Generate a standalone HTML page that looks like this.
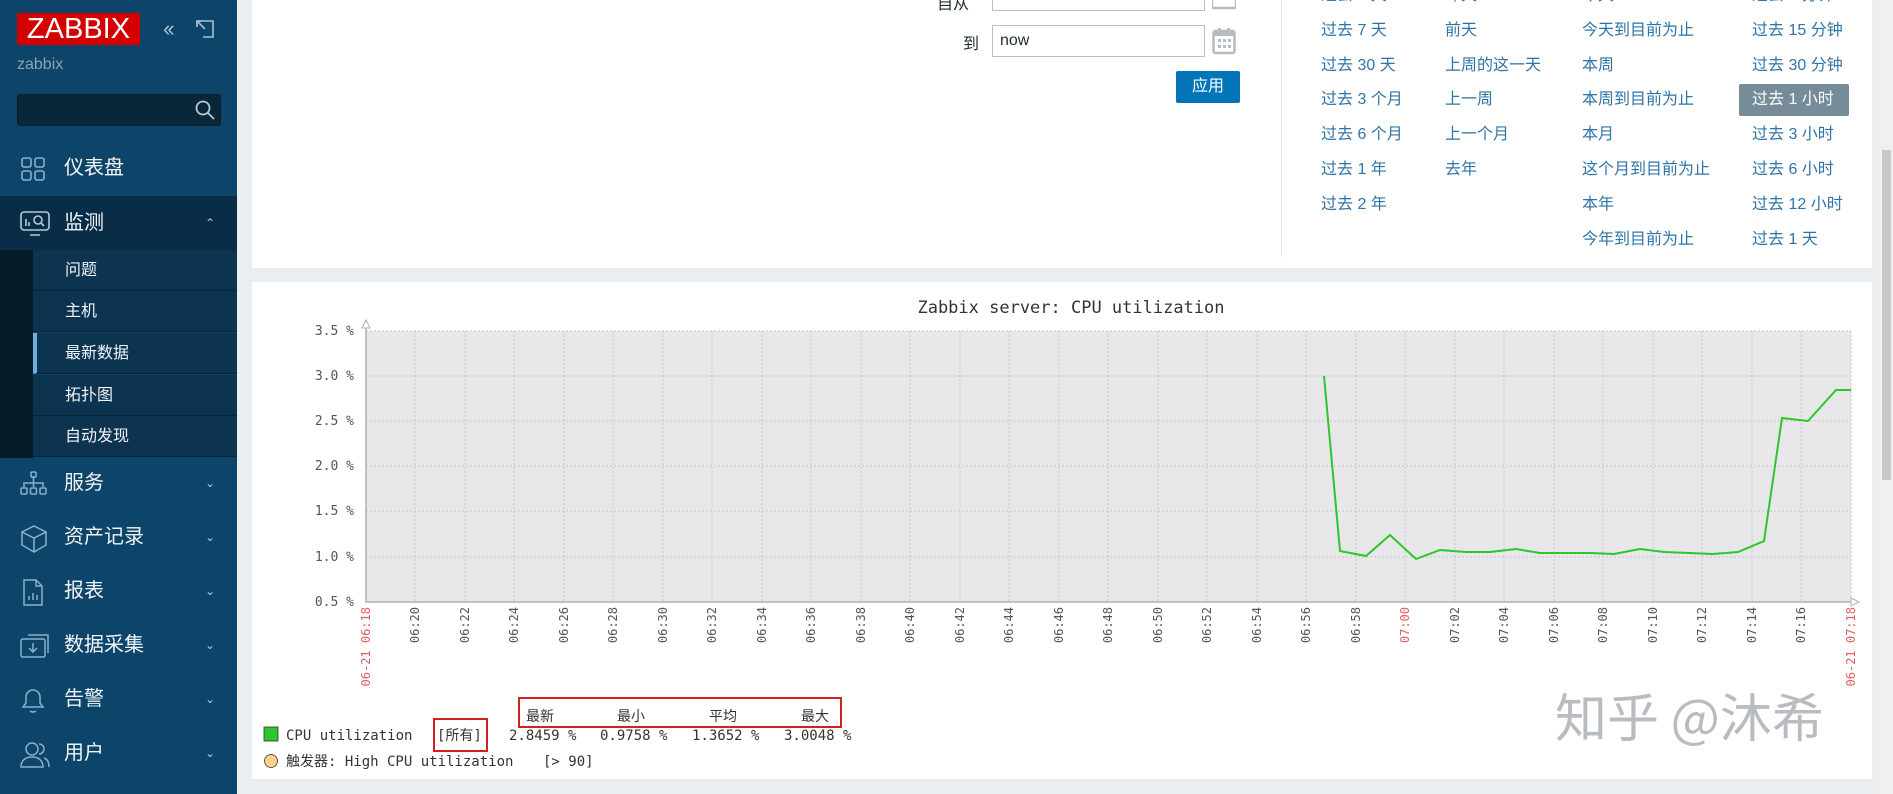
<!DOCTYPE html>
<html><head><meta charset="utf-8">
<style>
*{margin:0;padding:0;box-sizing:border-box}
body{width:1893px;height:794px;overflow:hidden;background:#ebeef0;font-family:"Liberation Sans","Noto Sans CJK SC",sans-serif;position:relative}
.sb{position:absolute;left:0;top:0;width:237px;height:794px;background:#0d4469}
.logo{position:absolute;left:17px;top:13px;width:123px;height:32px;background:#d40000;color:#fff;font-size:29px;line-height:32px;text-align:center;letter-spacing:0px}
.user{position:absolute;left:17px;top:56px;color:#8aa4b9;font-size:16px}
.search{position:absolute;left:17px;top:94px;width:204px;height:32px;background:#0a2639;border-radius:3px;border:1px solid #0a2030}
.nav{position:absolute;left:0;width:237px;height:54px;color:#f0f4f7;font-size:20px;line-height:54px;padding-left:64px}
.nav .ic{position:absolute;left:20px;top:15px}
.nav .ch{position:absolute;left:205px;top:0;font-size:12px;color:#b8c8d4}
.sub{position:absolute;left:33px;width:204px;height:41px;background:#0c3350;color:#f0f4f7;font-size:16px;line-height:41px;padding-left:32px;border-bottom:1px solid #082538}
.panel{position:absolute;background:#fff}
.lnk{position:absolute;color:#2f74a6;font-size:16px;line-height:20px;white-space:nowrap}
</style></head><body>
<div class="sb">
 <div class="logo">ZABBIX</div>
 <div style="position:absolute;left:163px;top:16px;color:#a9bfd0;font-size:22px;letter-spacing:-3px">&lsaquo;&lsaquo;</div>
 <svg style="position:absolute;left:195px;top:19px" width="20" height="20" fill="none" stroke="#a9bfd0" stroke-width="1.6"><path d="M2 8V2h16v16H8"/><path d="M2 2l8 8M2 2h5M2 2v5"/></svg>
 <div class="user">zabbix</div>
 <div class="search"><svg style="position:absolute;right:5px;top:5px" width="20" height="20" fill="none" stroke="#b8c8d4" stroke-width="1.8"><circle cx="8" cy="8" r="6.5"/><path d="M13 13l6 6"/></svg></div>
 <div class="nav" style="top:141px"><svg class="ic" width="26" height="26" fill="none" stroke="#8ab0cc" stroke-width="1.6"><rect x="2" y="2" width="9" height="9" rx="2"/><rect x="15" y="2" width="9" height="9" rx="2"/><rect x="2" y="15" width="9" height="9" rx="2"/><rect x="15" y="15" width="9" height="9" rx="2"/></svg>仪表盘</div>
 <div class="nav" style="top:196px;background:#0a2d47"><svg class="ic" width="30" height="26" fill="none" stroke="#b8c8d4" stroke-width="1.6"><rect x="1" y="1" width="28" height="18" rx="3"/><path d="M10 24h10M6 8v7M9 11v4"/><circle cx="18" cy="9" r="4"/><path d="M21 12l3 3"/></svg>监测<span class="ch">&#8963;</span></div>
 <div style="position:absolute;left:0;top:250px;width:33px;height:208px;background:#061a28"></div>
 <div class="sub" style="top:250px">问题</div>
 <div class="sub" style="top:291px">主机</div>
 <div class="sub" style="top:333px;border-left:4px solid #6faee0;padding-left:28px">最新数据</div>
 <div class="sub" style="top:375px">拓扑图</div>
 <div class="sub" style="top:416px">自动发现</div>
 <div class="nav" style="top:456px"><svg class="ic" width="28" height="26" fill="none" stroke="#8ab0cc" stroke-width="1.5"><rect x="11" y="1" width="5" height="5" rx="1"/><path d="M13.5 6v5M4 16v-4h19v4M13.5 11v5"/><rect x="1" y="17" width="6" height="6" rx="1"/><rect x="10.5" y="17" width="6" height="6" rx="1"/><rect x="20" y="17" width="6" height="6" rx="1"/></svg>服务<span class="ch">&#8964;</span></div>
 <div class="nav" style="top:510px"><svg class="ic" width="28" height="28" fill="none" stroke="#8ab0cc" stroke-width="1.5"><path d="M14 1l12 6v13l-12 7-12-7V7z M2 7l12 6 12-6M14 13v14"/></svg>资产记录<span class="ch">&#8964;</span></div>
 <div class="nav" style="top:564px"><svg class="ic" width="26" height="28" fill="none" stroke="#8ab0cc" stroke-width="1.5"><path d="M4 1h12l6 6v19H4z M16 1v6h6M9 21v-4M13 21v-7M17 21v-5"/></svg>报表<span class="ch">&#8964;</span></div>
 <div class="nav" style="top:618px"><svg class="ic" width="32" height="26" fill="none" stroke="#8ab0cc" stroke-width="1.5"><rect x="1" y="6" width="24" height="18" rx="2"/><path d="M8 2h20v18M13 10v9M9 15l4 4 4-4"/></svg>数据采集<span class="ch">&#8964;</span></div>
 <div class="nav" style="top:672px"><svg class="ic" width="26" height="28" fill="none" stroke="#8ab0cc" stroke-width="1.5"><path d="M3 20h20l-3-4V10a7 7 0 0 0-14 0v6z M10 24a4 3 0 0 0 6 0"/></svg>告警<span class="ch">&#8964;</span></div>
 <div class="nav" style="top:726px"><svg class="ic" width="30" height="28" fill="none" stroke="#8ab0cc" stroke-width="1.5"><circle cx="12" cy="8" r="6"/><path d="M1 26c0-7 5-10 11-10s11 3 11 10z"/><path d="M19 3a5 5 0 0 1 0 10M24 17c3 1 5 4 5 9"/></svg>用户<span class="ch">&#8964;</span></div>
</div>

<div class="panel" style="left:252px;top:0;width:1620px;height:268px"></div>
<div style="position:absolute;left:1281px;top:0;width:1px;height:257px;background:#e6e9ec"></div>
<div style="position:absolute;left:937px;top:-10px;font-size:16px;color:#1f2c33">自从</div>
<div style="position:absolute;left:992px;top:-20px;width:213px;height:31px;border:1px solid #b7bec4;font-size:16px;padding:4px 7px;color:#1f2c33">now-1h</div>
<div style="position:absolute;left:963px;top:30px;font-size:16px;color:#1f2c33">到</div>
<div style="position:absolute;left:992px;top:25px;width:213px;height:32px;border:1px solid #b7bec4;font-size:16px;line-height:30px;padding-left:7px;color:#1f2c33">now</div>
<svg style="position:absolute;left:1212px;top:-10px" width="24" height="20" fill="#b5bcc2"><rect x="0" y="0" width="24" height="18" rx="2" fill="none" stroke="#b5bcc2" stroke-width="2.5"/></svg>
<svg style="position:absolute;left:1212px;top:27px" width="24" height="28"><rect x="1.5" y="4" width="21" height="22" rx="2" fill="none" stroke="#b5bcc2" stroke-width="2.5"/><rect x="1.5" y="4" width="21" height="5" fill="#b5bcc2"/><rect x="6" y="1" width="3" height="5" fill="#b5bcc2"/><rect x="15" y="1" width="3" height="5" fill="#b5bcc2"/><g fill="#b5bcc2"><rect x="6" y="12" width="3" height="3"/><rect x="11" y="12" width="3" height="3"/><rect x="16" y="12" width="3" height="3"/><rect x="6" y="18" width="3" height="3"/><rect x="11" y="18" width="3" height="3"/><rect x="16" y="18" width="3" height="3"/></g></svg>
<div style="position:absolute;left:1176px;top:71px;width:64px;height:32px;background:#0275b8;border-radius:2px;color:#fff;font-size:16px;line-height:32px;text-align:center">应用</div>

<div class="lnk" style="left:1321px;top:-14px">过去 2 天</div><div class="lnk" style="left:1445px;top:-14px">昨天</div><div class="lnk" style="left:1582px;top:-14px">今天</div><div class="lnk" style="left:1752px;top:-14px">过去 5 分钟</div>
<div class="lnk" style="left:1321px;top:21px">过去 7 天</div><div class="lnk" style="left:1445px;top:21px">前天</div><div class="lnk" style="left:1582px;top:21px">今天到目前为止</div><div class="lnk" style="left:1752px;top:21px">过去 15 分钟</div>
<div class="lnk" style="left:1321px;top:56px">过去 30 天</div><div class="lnk" style="left:1445px;top:56px">上周的这一天</div><div class="lnk" style="left:1582px;top:56px">本周</div><div class="lnk" style="left:1752px;top:56px">过去 30 分钟</div>
<div style="position:absolute;left:1739px;top:84px;width:110px;height:32px;background:#768d99;border-radius:2px"></div>
<div class="lnk" style="left:1321px;top:90px">过去 3 个月</div><div class="lnk" style="left:1445px;top:90px">上一周</div><div class="lnk" style="left:1582px;top:90px">本周到目前为止</div><div class="lnk" style="left:1752px;top:90px;color:#fff">过去 1 小时</div>
<div class="lnk" style="left:1321px;top:125px">过去 6 个月</div><div class="lnk" style="left:1445px;top:125px">上一个月</div><div class="lnk" style="left:1582px;top:125px">本月</div><div class="lnk" style="left:1752px;top:125px">过去 3 小时</div>
<div class="lnk" style="left:1321px;top:160px">过去 1 年</div><div class="lnk" style="left:1445px;top:160px">去年</div><div class="lnk" style="left:1582px;top:160px">这个月到目前为止</div><div class="lnk" style="left:1752px;top:160px">过去 6 小时</div>
<div class="lnk" style="left:1321px;top:195px">过去 2 年</div><div class="lnk" style="left:1582px;top:195px">本年</div><div class="lnk" style="left:1752px;top:195px">过去 12 小时</div>
<div class="lnk" style="left:1582px;top:230px">今年到目前为止</div><div class="lnk" style="left:1752px;top:230px">过去 1 天</div>

<div class="panel" style="left:252px;top:282px;width:1620px;height:497px"></div>
<div style="position:absolute;left:1880px;top:0;width:13px;height:794px;background:#f0f0f0"></div>
<div style="position:absolute;left:1882px;top:150px;width:9px;height:330px;background:#c8c8c8"></div>

<svg style="position:absolute;left:0;top:0" width="1893" height="794" font-family="DejaVu Sans Mono,Noto Sans CJK SC,monospace">
 <rect x="366" y="331" width="1485" height="271" fill="#e8e8ea"/>
 <g stroke="#c6c6ca" stroke-dasharray="2,2" stroke-width="1">
  <path d="M366 331H1851M366 376H1851M366 421H1851M366 466H1851M366 511H1851M366 557H1851"/>
  <path d="M415 331V602M465 331V602M514 331V602M564 331V602M613 331V602M663 331V602M712 331V602M762 331V602M811 331V602M861 331V602M910 331V602M960 331V602M1009 331V602M1059 331V602M1108 331V602M1158 331V602M1207 331V602M1257 331V602M1306 331V602M1356 331V602M1405 331V602M1455 331V602M1504 331V602M1554 331V602M1603 331V602M1653 331V602M1702 331V602M1752 331V602M1801 331V602M1851 331V602"/>
 </g>
 <path d="M366 320V602H1851" fill="none" stroke="#a8b4bc" stroke-width="1.5"/>
 <path d="M362 328l4-8 4 8z M1851 598l8 4-8 4z" fill="#fff" stroke="#a8b4bc"/>
 <polyline fill="none" stroke="#2ac82a" stroke-width="2" points="1324,376 1340,551 1366,556 1390,535 1416,559 1440,550 1466,552 1490,552 1516,549 1540,553 1565,553 1590,553 1614,554 1640,549 1664,552 1689,553 1713,554 1738,552 1764,541 1782,418 1808,421 1836,390 1851,390"/>
 <text x="1071" y="313" font-size="17" text-anchor="middle" fill="#333">Zabbix server: CPU utilization</text>
 <g font-size="13" fill="#555" text-anchor="end">
  <text x="354" y="335">3.5 %</text><text x="354" y="380">3.0 %</text><text x="354" y="425">2.5 %</text><text x="354" y="470">2.0 %</text><text x="354" y="515">1.5 %</text><text x="354" y="561">1.0 %</text><text x="354" y="606">0.5 %</text>
 </g>
 <g font-size="12" fill="#555" text-anchor="end">
  <text transform="translate(370,607) rotate(-90)" fill="#e06060">06-21 06:18</text>
  <text transform="translate(419,607) rotate(-90)">06:20</text><text transform="translate(469,607) rotate(-90)">06:22</text><text transform="translate(518,607) rotate(-90)">06:24</text><text transform="translate(568,607) rotate(-90)">06:26</text><text transform="translate(617,607) rotate(-90)">06:28</text><text transform="translate(667,607) rotate(-90)">06:30</text><text transform="translate(716,607) rotate(-90)">06:32</text><text transform="translate(766,607) rotate(-90)">06:34</text><text transform="translate(815,607) rotate(-90)">06:36</text><text transform="translate(865,607) rotate(-90)">06:38</text><text transform="translate(914,607) rotate(-90)">06:40</text><text transform="translate(964,607) rotate(-90)">06:42</text><text transform="translate(1013,607) rotate(-90)">06:44</text><text transform="translate(1063,607) rotate(-90)">06:46</text><text transform="translate(1112,607) rotate(-90)">06:48</text><text transform="translate(1162,607) rotate(-90)">06:50</text><text transform="translate(1211,607) rotate(-90)">06:52</text><text transform="translate(1261,607) rotate(-90)">06:54</text><text transform="translate(1310,607) rotate(-90)">06:56</text><text transform="translate(1360,607) rotate(-90)">06:58</text>
  <text transform="translate(1409,607) rotate(-90)" fill="#e06060">07:00</text>
  <text transform="translate(1459,607) rotate(-90)">07:02</text><text transform="translate(1508,607) rotate(-90)">07:04</text><text transform="translate(1558,607) rotate(-90)">07:06</text><text transform="translate(1607,607) rotate(-90)">07:08</text><text transform="translate(1657,607) rotate(-90)">07:10</text><text transform="translate(1706,607) rotate(-90)">07:12</text><text transform="translate(1756,607) rotate(-90)">07:14</text><text transform="translate(1805,607) rotate(-90)">07:16</text>
  <text transform="translate(1855,607) rotate(-90)" fill="#e06060">06-21 07:18</text>
 </g>
 <rect x="519" y="698" width="322" height="29" fill="none" stroke="#d42020" stroke-width="2"/>
 <rect x="434" y="719" width="53" height="32" fill="none" stroke="#d42020" stroke-width="2"/>
 <g font-size="14" fill="#333">
  <text x="526" y="721">最新</text><text x="617" y="721">最小</text><text x="709" y="721">平均</text><text x="801" y="721">最大</text>
  <rect x="264" y="727" width="14" height="14" fill="#2ac82a" stroke="#333" stroke-width="0.8"/>
  <text x="286" y="740">CPU utilization</text>
  <text x="437" y="740">[所有]</text>
  <text x="509" y="740">2.8459 %</text><text x="600" y="740">0.9758 %</text><text x="692" y="740">1.3652 %</text><text x="784" y="740">3.0048 %</text>
  <circle cx="271" cy="761" r="6.5" fill="#ffd08a" stroke="#333" stroke-width="0.8"/>
  <text x="286" y="766">触发器: High CPU utilization</text>
  <text x="543" y="766">[&gt; 90]</text>
 </g>
 <text x="1555" y="737" font-size="52" fill="#b8bcc0" font-family="Noto Sans CJK SC,sans-serif">知乎 @沐希</text>
</svg>
</body></html>
